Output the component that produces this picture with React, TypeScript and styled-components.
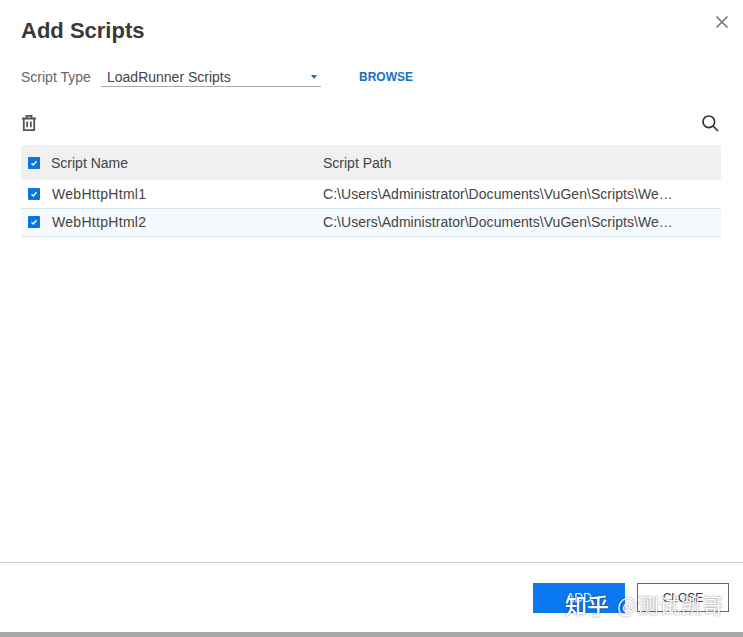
import { createGlobalStyle, styled } from "styled-components";

const Global = createGlobalStyle`
  html, body { margin: 0; padding: 0; background: #fff; }
  * { box-sizing: border-box; }
`;

const Dialog = styled.div`
  position: relative;
  display: flex;
  flex-direction: column;
  width: 743px;
  height: 637px;
  overflow: hidden;
  font-family: "Liberation Sans", Arial, sans-serif;
  color: #444;
  background: #fff;
`;

const Body = styled.div`
  flex: 1;
  padding: 17px 22px 0 21px;
`;

const Header = styled.div`
  display: flex;
  justify-content: space-between;
  align-items: flex-start;
`;

const Title = styled.h1`
  margin: 0;
  font-size: 22px;
  line-height: 27px;
  font-weight: 700;
  color: #383838;
`;

const CloseIcon = styled.button`
  display: flex;
  margin: -3px -9px 0 0;
  padding: 0;
  border: 0;
  background: none;
`;

const TypeRow = styled.div`
  display: flex;
  align-items: center;
  height: 20px;
  margin-top: 23px;
`;

const FieldLabel = styled.label`
  width: 80px;
  font-size: 14px;
  color: #666;
`;

const Select = styled.div`
  display: flex;
  justify-content: space-between;
  align-items: center;
  width: 220px;
  height: 20px;
  padding: 0 4px 0 6px;
  border-bottom: 1px solid #aaa;
  font-size: 14px;
  color: #444;
`;

const Caret = styled.span`
  width: 0;
  height: 0;
  border-left: 3.5px solid transparent;
  border-right: 3.5px solid transparent;
  border-top: 4px solid #1a6fc0;
`;

const Browse = styled.a`
  margin-left: 38px;
  font-size: 12px;
  font-weight: 700;
  color: #1a6fc0;
`;

const Tools = styled.div`
  display: flex;
  justify-content: space-between;
  align-items: center;
  height: 24px;
  margin-top: 24px;
  padding-right: 2px;
`;

const Table = styled.div`
  margin-top: 10px;
  font-size: 14px;
`;

const Row = styled.div<{ $head?: boolean; $alt?: boolean }>`
  display: grid;
  grid-template-columns: 302px 1fr;
  align-items: center;
  height: ${(p) => (p.$head ? "35px" : p.$alt ? "28px" : "29px")};
  padding-bottom: ${(p) => (p.$alt ? "1px" : "0")};
  background: ${(p) => (p.$head ? "#f0f0f0" : p.$alt ? "#f4fafd" : "#fff")};
  border-bottom: ${(p) => (p.$head ? "none" : "1px solid #d8e6ee")};
  color: #444;
`;

const NameCell = styled.div<{ $head?: boolean }>`
  display: flex;
  align-items: center;
  gap: ${(p) => (p.$head ? "11px" : "12px")};
  padding-left: 7px;
  letter-spacing: ${(p) => (p.$head ? "0" : "0.3px")};
`;

const Check = styled.span`
  display: flex;
  align-items: center;
  justify-content: center;
  width: 12px;
  height: 12px;
  border-radius: 1px;
  background: #0a74e0;
`;

const PathCell = styled.div`
  width: 351px;
  overflow: hidden;
  white-space: nowrap;
  text-overflow: ellipsis;
  letter-spacing: 0.04px;
`;

const Footer = styled.div`
  display: flex;
  justify-content: flex-end;
  gap: 12px;
  height: 70px;
  padding: 20px 14px 0 0;
  border-top: 1px solid #ccc;
`;

const Button = styled.button<{ $primary?: boolean }>`
  width: 92px;
  height: ${(p) => (p.$primary ? "30px" : "29px")};
  padding: 0;
  font-family: inherit;
  font-size: 12px;
  color: ${(p) => (p.$primary ? "#fff" : "#333")};
  background: ${(p) => (p.$primary ? "#0a78f0" : "#fff")};
  border: ${(p) => (p.$primary ? "none" : "1px solid #666")};
`;

const BottomBar = styled.div`
  height: 5px;
  background: #a8a8a8;
`;

const Watermark = styled.div`
  position: absolute;
  left: 565px;
  top: 590px;
  display: flex;
  align-items: center;
  gap: 8px;
  font-family: "Noto Sans CJK SC", sans-serif;
  color: #fff;
  text-shadow: 0 0 2px rgba(0, 0, 0, 0.6);
  white-space: nowrap;
`;

const WatermarkBrand = styled.span`
  font-size: 22px;
  line-height: 28px;
  font-weight: 500;
`;

const WatermarkUser = styled.span`
  font-size: 21px;
  line-height: 28px;
  letter-spacing: 0.6px;
  opacity: 0.9;
`;

const CheckMark = () => (
  <Check>
    <svg width="8" height="8" viewBox="0 0 8 8" fill="none">
      <path d="M1.5 4.2 3.3 6 6.5 2.2" stroke="#fff" strokeWidth="1.4" />
    </svg>
  </Check>
);

const rows = [
  { name: "WebHttpHtml1", alt: false },
  { name: "WebHttpHtml2", alt: true },
];

const scriptPath = "C:\\Users\\Administrator\\Documents\\VuGen\\Scripts\\WebHttpHtml1\\WebHttpHtml1.usr";

export default function App() {
  return (
    <Dialog>
      <Global />
      <Body>
        <Header>
          <Title>Add Scripts</Title>
          <CloseIcon aria-label="close">
            <svg width="16" height="16" viewBox="0 0 16 16" fill="none">
              <path d="M2.5 2.5 13.5 13.5M13.5 2.5 2.5 13.5" stroke="#777" strokeWidth="1.7" />
            </svg>
          </CloseIcon>
        </Header>

        <TypeRow>
          <FieldLabel>Script Type</FieldLabel>
          <Select>
            LoadRunner Scripts
            <Caret />
          </Select>
          <Browse>BROWSE</Browse>
        </TypeRow>

        <Tools>
          <svg width="16" height="18" viewBox="0 0 16 18" fill="none" stroke="#555" strokeWidth="1.8">
            <path d="M1 4.5H15M5.5 4.5V1.8H10.5V4.5M2.8 4.5V16.2H13.2V4.5M6.2 7.5V13.2M9.8 7.5V13.2" />
          </svg>
          <svg width="18" height="18" viewBox="0 0 18 18" fill="none" stroke="#333" strokeWidth="1.7">
            <circle cx="7.8" cy="7.8" r="5.8" />
            <path d="M12 12 17 17" />
          </svg>
        </Tools>

        <Table>
          <Row $head>
            <NameCell $head>
              <CheckMark />
              Script Name
            </NameCell>
            <div>Script Path</div>
          </Row>
          {rows.map((r) => (
            <Row key={r.name} $alt={r.alt}>
              <NameCell>
                <CheckMark />
                {r.name}
              </NameCell>
              <PathCell>{scriptPath}</PathCell>
            </Row>
          ))}
        </Table>
      </Body>

      <Footer>
        <Button $primary>ADD</Button>
        <Button>CLOSE</Button>
      </Footer>
      <BottomBar />

      <Watermark>
        <WatermarkBrand>知乎</WatermarkBrand>
        <WatermarkUser>@测试凯哥</WatermarkUser>
      </Watermark>
    </Dialog>
  );
}
